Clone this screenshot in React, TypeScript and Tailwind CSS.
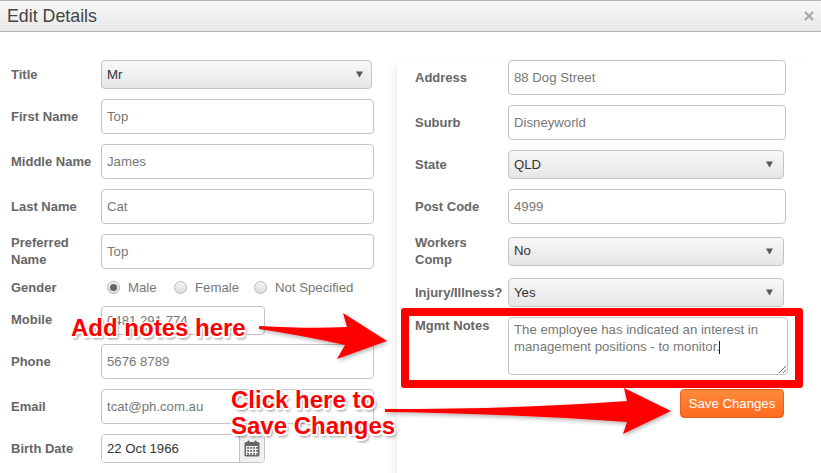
import React from "react";

const inputCls =
  "h-[35px] rounded-[4px] border border-[#c4c4c4] bg-white px-[5px] text-[13.2px] text-[#777] outline-none";

function Select({ value, width, caretPos = "right-[8px]" }: { value: string; width: string; caretPos?: string }) {
  return (
    <div className={`relative h-[29px] ${width}`}>
      <select
        defaultValue={value}
        className="h-full w-full appearance-none rounded-[4px] border border-[#c4c4c4] bg-gradient-to-b from-[#f8f8f8] to-[#e6e6e6] px-[5px] text-[13.2px] text-[#333] outline-none"
      >
        <option>{value}</option>
      </select>
      <svg width="9" height="9" viewBox="0 0 9 9" className={`pointer-events-none absolute top-[10px] ${caretPos}`}>
        <polygon points="1,1.5 8,1.5 4.5,7.5" fill="#5a5552" />
      </svg>
    </div>
  );
}

function Label({ children, className = "" }: { children: React.ReactNode; className?: string }) {
  return <label className={`block text-[13px] font-bold leading-[17px] text-[#666] ${className}`}>{children}</label>;
}

function Radio({ label, checked, className }: { label: string; checked?: boolean; className: string }) {
  return (
    <div className={`flex items-center ${className}`}>
      <span className="mr-[8px] flex h-[13px] w-[13px] items-center justify-center rounded-full border border-[#b5b5b5] bg-gradient-to-b from-[#f2f2f2] to-[#e0e0e0]">
        {checked && <span className="h-[7px] w-[7px] rounded-full bg-[#666]" />}
      </span>
      <span className="text-[13.2px] text-[#777]">{label}</span>
    </div>
  );
}

function CalendarIcon() {
  return (
    <svg width="16" height="17" viewBox="0 0 16 17" fill="#666">
      <path d="M2 2h12a1.5 1.5 0 0 1 1.5 1.5v11.5a1.5 1.5 0 0 1-1.5 1.5H2A1.5 1.5 0 0 1 .5 15V3.5A1.5 1.5 0 0 1 2 2zM2 6v9h12V6z" fillRule="evenodd" />
      <rect x="3.5" y="0.5" width="2" height="3" rx="0.7" />
      <rect x="10.5" y="0.5" width="2" height="3" rx="0.7" />
      {[3, 6, 9].map((y) =>
        [3.2, 6.2, 9.2, 12.2].map((x) => <rect key={`${x}-${y}`} x={x} y={y + 4} width="1.8" height="1.8" />),
      )}
    </svg>
  );
}

function Row({ label, children, className = "" }: { label: React.ReactNode; children: React.ReactNode; className?: string }) {
  return (
    <div className={`flex items-center ${className}`}>
      <div className="w-[90px] shrink-0">{label}</div>
      {children}
    </div>
  );
}

function RightRow({ label, children, className = "" }: { label: React.ReactNode; children: React.ReactNode; className?: string }) {
  return (
    <div className={`flex items-center ${className}`}>
      <div className="w-[93px] shrink-0">{label}</div>
      {children}
    </div>
  );
}

export default function App() {
  const annot =
    "font-bold text-[#f00] [text-shadow:1.5px_1.5px_0_#fff,-1.5px_-1.5px_0_#fff,1.5px_-1.5px_0_#fff,-1.5px_1.5px_0_#fff,2px_3px_3px_rgba(0,0,0,0.5)]";
  return (
    <div className="relative h-[473px] w-[821px] overflow-hidden bg-white font-['Liberation_Sans',Arial,sans-serif]">
      {/* header */}
      <div className="flex h-[32px] items-center justify-between border-y border-y-[#b5b5b5] bg-gradient-to-b from-[#f7f7f7] to-[#e8e8e8] pl-[7px] pr-[7px]">
        <h4 className="text-[17.8px] text-[#444]">Edit Details</h4>
        <svg width="10" height="10" viewBox="0 0 10 10" stroke="#a5a5a5" strokeWidth="2">
          <path d="M1 1l8 8M9 1l-8 8" />
        </svg>
      </div>

      <div className="flex h-[470px]">
        {/* left column */}
        <div className="w-[397px] pl-[11px] pt-[28px]">
          <Row label={<Label>Title</Label>} className="mb-[10px]">
            <Select value="Mr" width="w-[271px]" />
          </Row>
          <Row label={<Label>First Name</Label>} className="mb-[10px]">
            <input readOnly value="Top" className={`${inputCls} w-[273px]`} />
          </Row>
          <Row label={<Label>Middle Name</Label>} className="mb-[10px]">
            <input readOnly value="James" className={`${inputCls} w-[273px]`} />
          </Row>
          <Row label={<Label>Last Name</Label>} className="mb-[10px]">
            <input readOnly value="Cat" className={`${inputCls} w-[273px]`} />
          </Row>
          <Row label={<Label className="-mt-[2px]">Preferred Name</Label>} className="mb-[10px]">
            <input readOnly value="Top" className={`${inputCls} w-[273px]`} />
          </Row>
          <Row label={<Label>Gender</Label>} className="mb-[10px] h-[17px]">
            <Radio label="Male" checked className="w-[73px] pl-[6px]" />
            <Radio label="Female" className="w-[80px]" />
            <Radio label="Not Specified" className="" />
          </Row>
          <Row label={<Label className="-mt-[2px]">Mobile</Label>} className="mb-[9px]">
            <input readOnly value="0481 291 774" className={`${inputCls} !h-[29px] w-[164px]`} />
          </Row>
          <Row label={<Label>Phone</Label>} className="mb-[10px]">
            <input readOnly value="5676 8789" className={`${inputCls} w-[273px]`} />
          </Row>
          <Row label={<Label>Email</Label>} className="mb-[10px]">
            <input readOnly value="tcat@ph.com.au" className={`${inputCls} w-[273px]`} />
          </Row>
          <Row label={<Label>Birth Date</Label>}>
            <div className="flex h-[29px] w-[164px] overflow-hidden rounded-[4px] border border-[#c4c4c4]">
              <input readOnly value="22 Oct 1966" className="w-[137px] bg-white px-[5px] text-[13.2px] text-[#333] outline-none" />
              <div className="flex flex-1 items-center justify-center border-l border-l-[#c4c4c4] bg-[#f0f0f0]">
                <CalendarIcon />
              </div>
            </div>
          </Row>
        </div>

        {/* right column */}
        <div className="mt-[28px] w-[424px] bg-white pl-[18px] shadow-[-7px_0_9px_-5px_rgba(0,0,0,0.09)]">
          <RightRow label={<Label>Address</Label>} className="mb-[10px]">
            <input readOnly value="88 Dog Street" className={`${inputCls} w-[278px]`} />
          </RightRow>
          <RightRow label={<Label>Suburb</Label>} className="mb-[10px]">
            <input readOnly value="Disneyworld" className={`${inputCls} w-[278px]`} />
          </RightRow>
          <RightRow label={<Label>State</Label>} className="mb-[10px]">
            <Select value="QLD" width="w-[276px]" caretPos="right-[10px]" />
          </RightRow>
          <RightRow label={<Label>Post Code</Label>} className="mb-[10px]">
            <input readOnly value="4999" className={`${inputCls} w-[278px]`} />
          </RightRow>
          <RightRow label={<Label className="w-[70px]">Workers Comp</Label>} className="mb-[10px]">
            <Select value="No" width="w-[276px]" caretPos="right-[10px]" />
          </RightRow>
          <RightRow label={<Label>Injury/Illness?</Label>} className="mb-[10px]">
            <Select value="Yes" width="w-[276px]" caretPos="right-[10px]" />
          </RightRow>
          <RightRow label={<Label>Mgmt Notes</Label>} className="mb-[14px] !items-start">
            <div className="relative">
              <textarea
                readOnly
                defaultValue="The employee has indicated an interest in management positions - to monitor."
                className="block h-[58px] w-[280px] rounded-[4px] border border-[#c4c4c4] px-[5px] py-[3px] text-[13.2px] leading-[17px] text-[#777] outline-none"
              />
              <span className="absolute left-[211px] top-[24px] h-[13px] w-px bg-[#222]" />
            </div>
          </RightRow>
          <div className="ml-[265px]">
            <button className="h-[29px] w-[104px] rounded-[4px] border border-[#e8601a] bg-gradient-to-b from-[#ff8a3c] to-[#ff6a1c] text-[13.2px] text-white">
              Save Changes
            </button>
          </div>
        </div>
      </div>

      {/* annotations sit over the form */}
      <div className="absolute left-[401px] top-[308px] h-[80px] w-[402px] rounded-[3px] border-[8px] border-[#f00]" />
      <svg width="821" height="473" className="pointer-events-none absolute left-0 top-0">
        <defs>
          <filter id="s" x="-10%" y="-30%" width="120%" height="160%">
            <feDropShadow dx="1" dy="2" stdDeviation="2" floodColor="#000" floodOpacity="0.3" />
          </filter>
        </defs>
        <g fill="#f00" filter="url(#s)">
          <path d="M259 326 Q310 329 347 327 L343 313 L387 341 L337 359 L345 345 Q300 335 259 329Z" />
          <path d="M385 409 Q520 409 627 401 L624 388 L671 411 L623 434 L627 422 Q520 414 385 412Z" />
        </g>
      </svg>
      <div className={`absolute left-[71px] top-[314px] text-[24px] leading-[28px] ${annot}`}>Add notes here</div>
      <div className={`absolute left-[231px] top-[387px] text-[24px] leading-[26px] ${annot}`}>
        Click here to
        <br />
        Save Changes
      </div>
    </div>
  );
}
